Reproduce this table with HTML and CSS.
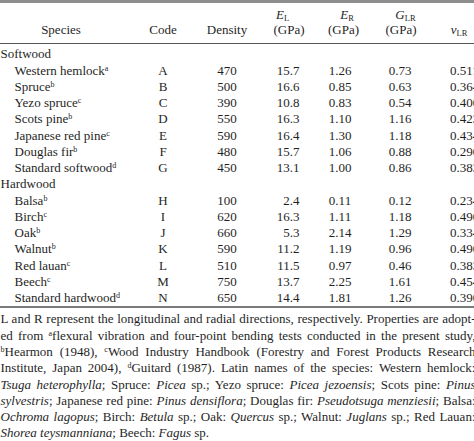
FILE: index.html
```html
<!DOCTYPE html>
<html>
<head>
<meta charset="utf-8">
<link rel="stylesheet" href="styles.css">
</head>
<body>
<div class="page">
  <div class="table">
    <div class="thead">
      <div class="hc h-species">Species</div>
      <div class="hc h-code">Code</div>
      <div class="hc h-den">Density</div>
      <div class="hc h-el"><div class="top"><i>E</i><sub>L</sub></div><div>(GPa)</div></div>
      <div class="hc h-er"><div class="top"><i>E</i><sub>R</sub></div><div>(GPa)</div></div>
      <div class="hc h-glr"><div class="top"><i>G</i><sub>LR</sub></div><div>(GPa)</div></div>
      <div class="hc h-nu"><i>ν</i><sub>LR</sub></div>
    </div>
    <div class="tbody">
      <div class="row"><div class="group">Softwood</div></div>
      <div class="row"><div class="name">Western hemlock<sup>a</sup></div><div class="code">A</div><div class="den">470</div><div class="el">15.7</div><div class="er">1.26</div><div class="glr">0.73</div><div class="nu">0.511</div></div>
      <div class="row"><div class="name">Spruce<sup>b</sup></div><div class="code">B</div><div class="den">500</div><div class="el">16.6</div><div class="er">0.85</div><div class="glr">0.63</div><div class="nu">0.364</div></div>
      <div class="row"><div class="name">Yezo spruce<sup>c</sup></div><div class="code">C</div><div class="den">390</div><div class="el">10.8</div><div class="er">0.83</div><div class="glr">0.54</div><div class="nu">0.400</div></div>
      <div class="row"><div class="name">Scots pine<sup>b</sup></div><div class="code">D</div><div class="den">550</div><div class="el">16.3</div><div class="er">1.10</div><div class="glr">1.16</div><div class="nu">0.423</div></div>
      <div class="row"><div class="name">Japanese red pine<sup>c</sup></div><div class="code">E</div><div class="den">590</div><div class="el">16.4</div><div class="er">1.30</div><div class="glr">1.18</div><div class="nu">0.434</div></div>
      <div class="row"><div class="name">Douglas fir<sup>b</sup></div><div class="code">F</div><div class="den">480</div><div class="el">15.7</div><div class="er">1.06</div><div class="glr">0.88</div><div class="nu">0.290</div></div>
      <div class="row"><div class="name">Standard softwood<sup>d</sup></div><div class="code">G</div><div class="den">450</div><div class="el">13.1</div><div class="er">1.00</div><div class="glr">0.86</div><div class="nu">0.383</div></div>
      <div class="row"><div class="group">Hardwood</div></div>
      <div class="row"><div class="name">Balsa<sup>b</sup></div><div class="code">H</div><div class="den">100</div><div class="el">2.4</div><div class="er">0.11</div><div class="glr">0.12</div><div class="nu">0.234</div></div>
      <div class="row"><div class="name">Birch<sup>c</sup></div><div class="code">I</div><div class="den">620</div><div class="el">16.3</div><div class="er">1.11</div><div class="glr">1.18</div><div class="nu">0.490</div></div>
      <div class="row"><div class="name">Oak<sup>b</sup></div><div class="code">J</div><div class="den">660</div><div class="el">5.3</div><div class="er">2.14</div><div class="glr">1.29</div><div class="nu">0.334</div></div>
      <div class="row"><div class="name">Walnut<sup>b</sup></div><div class="code">K</div><div class="den">590</div><div class="el">11.2</div><div class="er">1.19</div><div class="glr">0.96</div><div class="nu">0.490</div></div>
      <div class="row"><div class="name">Red lauan<sup>c</sup></div><div class="code">L</div><div class="den">510</div><div class="el">11.5</div><div class="er">0.97</div><div class="glr">0.46</div><div class="nu">0.383</div></div>
      <div class="row"><div class="name">Beech<sup>c</sup></div><div class="code">M</div><div class="den">750</div><div class="el">13.7</div><div class="er">2.25</div><div class="glr">1.61</div><div class="nu">0.454</div></div>
      <div class="row"><div class="name">Standard hardwood<sup>d</sup></div><div class="code">N</div><div class="den">650</div><div class="el">14.4</div><div class="er">1.81</div><div class="glr">1.26</div><div class="nu">0.390</div></div>
    </div>
  </div>
  <div class="caption">
    <div class="ln">L and R represent the longitudinal and radial directions, respectively. Properties are adopt-</div>
    <div class="ln">ed from <sup>a</sup>flexural vibration and four-point bending tests conducted in the present study,</div>
    <div class="ln"><sup>b</sup>Hearmon (1948), <sup>c</sup>Wood Industry Handbook (Forestry and Forest Products Research</div>
    <div class="ln">Institute, Japan 2004), <sup>d</sup>Guitard (1987). Latin names of the species: Western hemlock:</div>
    <div class="ln"><i>Tsuga heterophylla</i>; Spruce: <i>Picea</i> sp.; Yezo spruce: <i>Picea jezoensis</i>; Scots pine: <i>Pinus</i></div>
    <div class="ln"><i>sylvestris</i>; Japanese red pine: <i>Pinus densiflora</i>; Douglas fir: <i>Pseudotsuga menziesii</i>; Balsa:</div>
    <div class="ln"><i>Ochroma lagopus</i>; Birch: <i>Betula</i> sp.; Oak: <i>Quercus</i> sp.; Walnut: <i>Juglans</i> sp.; Red Lauan:</div>
    <div class="ln last"><i>Shorea teysmanniana</i>; Beech: <i>Fagus</i> sp.</div>
  </div>
</div>
</body>
</html>
```

FILE: styles.css
```css
html, body {
  margin: 0;
  padding: 0;
  background: #ffffff;
  overflow: hidden;
}

body {
  font-family: "Liberation Serif", "Times New Roman", serif;
  font-size: 13px;
  color: #1f1f1f;
  width: 474px;
  height: 441px;
}

.page {
  width: 474px;
  height: 441px;
  overflow: hidden;
}

.table {
  width: 498px;
  border-top: 3px solid #8e8e8e;
}

.thead,
.row {
  display: grid;
  grid-template-columns: 122px 82px 46px 78px 40px 70px 60px;
}

.thead {
  align-items: end;
  padding: 4px 0 6px;
  line-height: 15px;
  border-bottom: 1px solid #555555;
}

.hc {
  text-align: center;
  white-space: nowrap;
}

.h-el .top { padding-right: 13px; }
.h-er { padding-right: 10px; }
.h-er .top { padding-left: 8px; }
.h-glr { padding-right: 4px; }
.h-glr .top { padding-left: 9px; }
.h-nu { padding-right: 18px; }

i {
  font-style: italic;
}

sub {
  font-size: 8.5px;
  vertical-align: -2px;
  line-height: 0;
  font-style: normal;
}

sup {
  font-size: 8px;
  vertical-align: 4px;
  line-height: 0;
}

.tbody {
  padding-top: 2.3px;
  line-height: 16.25px;
  border-bottom: 2px solid #7a7a7a;
}

.group {
  grid-column: 1 / -1;
  padding-left: 0.5px;
  white-space: nowrap;
}

.name {
  padding-left: 14.5px;
  white-space: nowrap;
}

.code {
  text-align: center;
}

.den {
  text-align: center;
}

.el {
  text-align: right;
  padding-right: 28.5px;
}

.er {
  text-align: center;
  padding-right: 16px;
}

.glr {
  text-align: center;
  padding-right: 6px;
}

.nu {
  text-align: left;
  padding-left: 12px;
  white-space: nowrap;
}

.caption {
  margin-top: 2.9px;
  width: 475px;
  padding-left: 0.5px;
  line-height: 16.33px;
}

.ln {
  text-align: justify;
  text-align-last: justify;
}

.ln.last {
  text-align-last: left;
}
```
